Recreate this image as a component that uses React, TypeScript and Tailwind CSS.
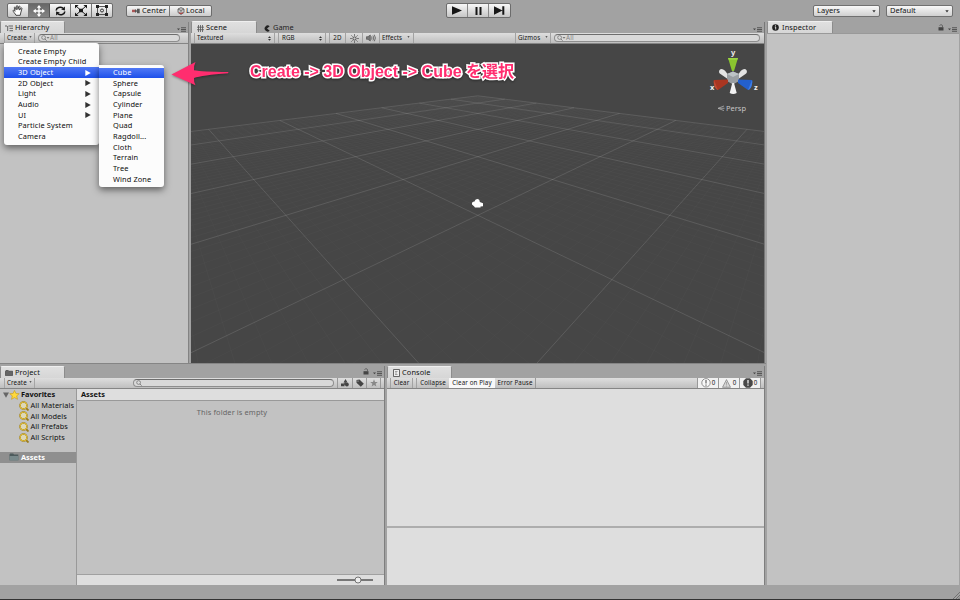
import type { ReactNode } from 'react'

const createMenu = [
    { label: 'Create Empty' },
    { label: 'Create Empty Child' },
    { label: '3D Object', sub: true, active: true },
    { label: '2D Object', sub: true },
    { label: 'Light', sub: true },
    { label: 'Audio', sub: true },
    { label: 'UI', sub: true },
    { label: 'Particle System' },
    { label: 'Camera' },
]

const objectMenu = ['Cube', 'Sphere', 'Capsule', 'Cylinder', 'Plane', 'Quad', 'Ragdoll...', 'Cloth', 'Terrain', 'Tree', 'Wind Zone']

const favorites = ['All Materials', 'All Models', 'All Prefabs', 'All Scripts']

// ground plane seen at 45 degrees, depth grows away from the camera
const project = (i: number, j: number) => {
    const d = (i + j) / 2 + 1.756
    return [286.8 + (337 * (i - j)) / 2 / d, 9.8 + 283.6 / d]
}

const gridPath = (values: number[]) =>
    values
        .map((v) => {
            const near = Math.max(-5, -3.1 - v)
            const [ax, ay] = project(v, near)
            const [bx, by] = project(v, 5)
            const [cx, cy] = project(near, v)
            const [dx, dy] = project(5, v)
            return `M${ax} ${ay}L${bx} ${by}M${cx} ${cy}L${dx} ${dy}`
        })
        .join('')

const major = Array.from({ length: 11 }, (_, n) => n - 5)
const minor = Array.from({ length: 101 }, (_, n) => n / 10 - 5).filter((_, n) => n % 10 !== 0)

function Tab({ icon, label, className = '' }: { icon: ReactNode; label: string; className?: string }) {
    return (
        <div className={`flex h-[12px] items-center gap-[2px] rounded-t-[2px] border-x border-t border-[#8c8c8c] border-t-[#efefef] bg-gradient-to-b from-[#e0e0e0] to-[#d6d6d6] pt-px text-[7.4px] tracking-[0.12px] text-[#111] ${className}`}>
            {icon}
            <span>{label}</span>
        </div>
    )
}

function PaneMenu() {
    return (
        <svg className="mb-px h-[5px] w-[9px] shrink-0" viewBox="0 0 9 5">
            <path d="M0 1.5h3L1.5 3.3z" fill="#444" />
            <path d="M4 .8h5M4 2.5h5M4 4.2h5" stroke="#555" strokeWidth="1.1" />
        </svg>
    )
}

function Lock() {
    return (
        <svg className="mb-[2px] h-[7px] w-[6px] shrink-0" viewBox="0 0 6 7">
            <path d="M.5 3.2h5v3.3h-5z" fill="#444" />
            <path d="M1.6 1.7C2 .3 4.5.3 4.5 2v1.5" fill="none" stroke="#555" strokeWidth=".8" />
        </svg>
    )
}

function Caret({ className = '' }: { className?: string }) {
    return (
        <svg className={`shrink-0 ${className || 'mb-[2px] h-[2px] w-[3px]'}`} viewBox="0 0 4 3">
            <path d="M.3 .3h3.4L2 2.6z" fill="#333" />
        </svg>
    )
}

function UpDown() {
    return (
        <svg className="h-[5px] w-[3px] shrink-0" viewBox="0 0 3 5">
            <path d="M0 2h3L1.5.2zM0 3h3L1.5 4.8z" fill="#333" />
        </svg>
    )
}

function Search({ placeholder, className = '' }: { placeholder?: string; className?: string }) {
    return (
        <div className={`flex h-[8px] items-center rounded-full border border-[#8e8e8e] border-t-[#6e6e6e] bg-[#d9d9d9] pl-[2px] text-[6.3px] text-[#858585] ${className}`}>
            <svg className="h-[6px] w-[9px] shrink-0" viewBox="0 0 9 6">
                <circle cx="2.6" cy="2.5" r="1.9" fill="none" stroke="#777" strokeWidth=".8" />
                <path d="M4 4l1.6 1.7" stroke="#777" strokeWidth=".9" />
                {placeholder && <path d="M5.5 2h3L7 3.7z" fill="#777" />}
            </svg>
            <span>{placeholder}</span>
        </div>
    )
}

function Toolbar({ children, className = '' }: { children?: ReactNode; className?: string }) {
    return <div className={`flex h-[11px] shrink-0 items-stretch border-b border-[#858585] bg-gradient-to-b from-[#dedede] to-[#bfbfbf] text-[6.2px] tracking-[0.12px] text-[#151515] ${className}`}>{children}</div>
}

function Tools() {
    return (
        <div className="flex h-[15px] w-[106px] overflow-hidden rounded-[2px] border border-[#6c6c6c] bg-gradient-to-b from-[#fafafa] to-[#c8c8c8]">
            <div className="flex w-[21px] items-center justify-center border-r border-[#777]">
                <svg className="h-[11px] w-[12px]" viewBox="0 0 12 11">
                    <path d="M4 10.3C3.2 8.5 1.2 7 1 5.7c.3-.8 1.2-.4 2 .6L2.3 2.7c.1-.8.9-.8 1.1-.1l.8 2.2L4.4 1.2c.2-.8 1.1-.8 1.3 0l.2 3.3.9-3c.3-.7 1.2-.5 1.2.2l-.4 3.4 1.3-2c.6-.6 1.2-.1 1 .6L8.700 8l-.5 2.300z" fill="#fff" stroke="#222" strokeWidth=".8" />
                </svg>
            </div>
            <div className="flex w-[21px] items-center justify-center border-r border-[#555] bg-gradient-to-b from-[#686868] to-[#858585]">
                <svg className="h-[12px] w-[12px]" viewBox="0 0 12 12">
                    <path d="M6 0l2.2 2.8H6.7v2.5h2.5V3.8L12 6 9.2 8.2V6.7H6.7v2.5h1.5L6 12 3.8 9.2h1.5V6.7H2.8v1.5L0 6l2.8-2.2v1.5h2.5V2.8H3.8z" fill="#fff" />
                </svg>
            </div>
            <div className="flex w-[21px] items-center justify-center border-r border-[#777]">
                <svg className="h-[10px] w-[11px]" viewBox="0 0 11 10">
                    <path d="M1.2 4.5C1.4 1.4 5.5.4 8 2.2M9.8 5.5C9.6 8.6 5.5 9.6 3 7.8" fill="none" stroke="#151515" strokeWidth="1.6" />
                    <path d="M9.9.4v4L6.2 3.6zM1.1 9.6v-4l3.7.8z" fill="#151515" />
                </svg>
            </div>
            <div className="flex w-[21px] items-center justify-center border-r border-[#777]">
                <svg className="h-[11px] w-[12px]" viewBox="0 0 12 11">
                    <path d="M1 1l10 9M11 1L1 10" stroke="#222" strokeWidth="1" />
                    <path d="M0 0h3.600L0 3.400zM12 0H8.400L12 3.400zM0 11h3.600L0 7.600zM12 11H8.400l3.600-3.400zM4 3.700h4v3.600H4z" fill="#181818" />
                </svg>
            </div>
            <div className="flex flex-1 items-center justify-center">
                <svg className="h-[11px] w-[12px]" viewBox="0 0 12 11">
                    <path d="M1.5 1.5h9v8h-9z" fill="none" stroke="#333" strokeWidth=".8" />
                    <path d="M0 0h3v3H0zM9 0h3v3H9zM0 8h3v3H0zM9 8h3v3H9z" fill="#222" />
                    <circle cx="6" cy="5.5" r="1.5" fill="none" stroke="#222" strokeWidth=".9" />
                </svg>
            </div>
        </div>
    )
}

function TopBar() {
    return (
        <div className="flex h-[22px] shrink-0 items-start pl-[7px] pr-[7px] pt-[3px] text-[7.5px] text-[#111]">
            <Tools />
            <div className="ml-[13px] mt-[2px] flex h-[12px] w-[86px] rounded-[2px] border border-[#6c6c6c] bg-gradient-to-b from-[#f6f6f6] to-[#cbcbcb] tracking-[0.1px]">
                <div className="flex w-[43px] items-center gap-[2px] border-r border-[#777] pl-[5px]">
                    <svg className="h-[6px] w-[8px] shrink-0" viewBox="0 0 8 6">
                        <path d="M0 1.700h3v2.500H0z" fill="#a55" />
                        <path d="M3 1l2.300 2L3 5zM5 .7h2.700v4.500H5z" fill="#555" />
                    </svg>
                    <span>Center</span>
                </div>
                <div className="flex flex-1 items-center gap-[1px] pl-[7px]">
                    <svg className="h-[8px] w-[8px] shrink-0" viewBox="0 0 8 8">
                        <path d="M1 2l3-1.400L7 2v3.500L4 7.400 1 5.500z" fill="#ccc" stroke="#555" strokeWidth=".8" />
                        <path d="M1 2l3 1.500L7 2M4 3.500v3.700" fill="none" stroke="#555" strokeWidth=".7" />
                        <path d="M2 5.500l2 1.200 2-1.200" fill="none" stroke="#b33" strokeWidth=".9" />
                    </svg>
                    <span>Local</span>
                </div>
            </div>
            <div className="ml-[234px] flex h-[15px] w-[65px] rounded-[2px] border border-[#6c6c6c] bg-gradient-to-b from-[#f8f8f8] to-[#c6c6c6]">
                <div className="flex w-[21px] items-center justify-center border-r border-[#888]">
                    <svg className="h-[9px] w-[10px]" viewBox="0 0 10 9"><path d="M0 .3l10 4.200-10 4.200z" fill="#161616" /></svg>
                </div>
                <div className="flex w-[21px] items-center justify-center border-r border-[#888]">
                    <svg className="h-[8px] w-[7px]" viewBox="0 0 7 8"><path d="M.5 0h2v8h-2zM4.500 0h2v8h-2z" fill="#161616" /></svg>
                </div>
                <div className="flex flex-1 items-center justify-center">
                    <svg className="h-[9px] w-[11px]" viewBox="0 0 11 9"><path d="M0 .3l8.500 4.200L0 8.700zM8.300.3h2v8.400h-2z" fill="#161616" /></svg>
                </div>
            </div>
            <div className="ml-auto mt-[2px] flex h-[12px] w-[67px] items-center justify-between rounded-[2px] border border-[#707070] bg-gradient-to-b from-[#f8f8f8] to-[#d0d0d0] pl-[3px] pr-[3px]">
                <span>Layers</span>
                <Caret className="h-[3px] w-[4px]" />
            </div>
            <div className="ml-[6px] mt-[2px] flex h-[12px] w-[67px] items-center justify-between rounded-[2px] border border-[#707070] bg-gradient-to-b from-[#f8f8f8] to-[#d0d0d0] pl-[3px] pr-[3px]">
                <span>Default</span>
                <Caret className="h-[3px] w-[4px]" />
            </div>
        </div>
    )
}

function CreateButton() {
    return (
        <div className="ml-[4px] flex w-[31px] items-center justify-between border-x border-[#a5a5a5] px-[2px]">
            <span>Create</span>
            <Caret />
        </div>
    )
}

function Hierarchy() {
    return (
        <div className="flex w-[189px] shrink-0 flex-col border-r border-[#838383]">
            <div className="flex h-[11px] items-end justify-between pr-[2px]">
                <Tab
                    className="w-[65px] pl-[4px]"
                    label="Hierarchy"
                    icon={
                        <svg className="h-[7px] w-[8px]" viewBox="0 0 8 7">
                            <path d="M0 1h2M3.500 1H8M4.500 3.300H8M4.500 5.700H8M2.700 1v5" stroke="#555" strokeWidth=".9" />
                        </svg>
                    }
                />
                <PaneMenu />
            </div>
            <Toolbar>
                <CreateButton />
                <Search placeholder="All" className="ml-[3px] mt-[1px] w-[142px]" />
            </Toolbar>
            <div className="flex-1 bg-[#c2c2c2]" />
        </div>
    )
}

function Gizmo() {
    return (
        <svg className="absolute left-[515px] top-[4px] h-[72px] w-[56px] overflow-visible" viewBox="0 0 56 72">
            <path d="M21 30.500l-6.500-4.500c-2-1-2-4 .5-5 2 0 4.500 1.500 5 3l3 4z" fill="#e4e4e4" />
            <path d="M33 30.500l6.500-4.500c2-1 2-4-.5-5-2 0-4.500 1.500-5 3l-3 4z" fill="#e4e4e4" />
            <path d="M21 26l6-2.500 6 2.500v7l-6 3.500-6-3.500z" fill="#9a9fa3" />
            <path d="M21 26l6-2.500 6 2.500-6 3z" fill="#bdc3c6" />
            <path d="M22 10h10l-4 13h-2z" fill="#8ac52f" />
            <path d="M22 10h10l-.7 1.800h-8.600z" fill="#9bd643" />
            <path d="M22 31.500L8 32c-1 2 1 9 4 10l10-7z" fill="#a93621" />
            <path d="M8 32l4 10c-3 0-5-7-4-10z" fill="#c04a34" />
            <path d="M32 31.500l14 .5c1 2-1 9-4 10l-10-7z" fill="#2360cd" />
            <path d="M46 32l-4 10c3 0 5-7 4-10z" fill="#3d7de8" />
            <path d="M26.300 35h1.700l2.700 10q-3.500 2-7 0z" fill="#f2f2f2" />
            <g fill="#eee" fontFamily="Noto Sans" fontSize="7.500" fontWeight="bold">
                <text x="25" y="7">y</text>
                <text x="4" y="41.500">x</text>
                <text x="48" y="41.500">z</text>
            </g>
            <path d="M18 58l-6 2.300 6 2.300M12.500 60.300h6" fill="none" stroke="#bbb" strokeWidth=".7" />
            <text x="20" y="63" fill="#c5c5c5" fontFamily="Noto Sans" fontSize="7.500">Persp</text>
        </svg>
    )
}

function Scene() {
    return (
        <div className="ml-[2px] flex w-[574px] shrink-0 flex-col border-r border-[#777]">
            <div className="flex h-[11px] items-end pr-[2px]">
                <Tab
                    className="w-[66px] pl-[5px]"
                    label="Scene"
                    icon={
                        <svg className="h-[7px] w-[7px]" viewBox="0 0 7 7">
                            <path d="M1.500 0v7M3.500 0v7M5.500 0v7M0 2.200h7M0 4.700h7" stroke="#555" strokeWidth=".8" />
                        </svg>
                    }
                />
                <div className="ml-[7px] flex h-[11px] items-center gap-[3px] pt-px text-[7.4px] text-[#222]">
                    <svg className="h-[7px] w-[6px]" viewBox="0 0 6 7">
                        <path d="M5.700 1.300A3 3 0 1 0 5.700 5.700L3 3.500z" fill="#222" />
                    </svg>
                    <span>Game</span>
                </div>
                <div className="ml-auto flex"><PaneMenu /></div>
            </div>
            <Toolbar>
                <div className="ml-[3px] flex w-[81px] items-center justify-between border-x border-[#a2a2a2] pl-[2px] pr-[3px]">
                    <span>Textured</span>
                    <UpDown />
                </div>
                <div className="ml-[3px] flex w-[48px] items-center justify-between border-x border-[#a2a2a2] px-[3px]">
                    <span>RGB</span>
                    <UpDown />
                </div>
                <div className="ml-[3px] flex w-[17px] items-center justify-center border-x border-[#a2a2a2]">2D</div>
                <div className="flex w-[17px] items-center justify-center border-r border-[#a2a2a2]">
                    <svg className="h-[9px] w-[9px]" viewBox="0 0 9 9">
                        <circle cx="4.500" cy="4.500" r="1.600" fill="none" stroke="#333" strokeWidth=".8" />
                        <path d="M4.500.3v1.400M4.500 7.300v1.400M.3 4.500h1.400M7.300 4.500h1.400M1.500 1.500l1 1M6.500 6.500l1 1M1.500 7.500l1-1M6.500 2.500l1-1" stroke="#333" strokeWidth=".8" />
                    </svg>
                </div>
                <div className="flex w-[17px] items-center justify-center border-r border-[#a2a2a2]">
                    <svg className="h-[8px] w-[10px]" viewBox="0 0 10 8">
                        <path d="M.5 2.700h1.500L4.300 1v6L2 5.300H.5z" fill="#777" stroke="#444" strokeWidth=".6" />
                        <path d="M5.500 2.500q1 1.500 0 3M6.900 1.500q1.800 2.500 0 5M8.300.7q2.200 3.300 0 6.600" fill="none" stroke="#444" strokeWidth=".7" />
                    </svg>
                </div>
                <div className="flex w-[34px] items-center justify-between border-r border-[#a2a2a2] pl-[2px] pr-[3px]">
                    <span>Effects</span>
                    <Caret />
                </div>
                <div className="ml-[101px] flex w-[36px] items-center justify-between border-x border-[#a2a2a2] px-[2px]">
                    <span>Gizmos</span>
                    <Caret />
                </div>
                <Search placeholder="All" className="ml-[3px] mt-[1px] w-[206px]" />
            </Toolbar>
            <div className="relative flex-1 overflow-hidden bg-[#464646]">
                <svg className="block h-[319px] w-[573px]" viewBox="0 0 573 319">
                    <path d={gridPath(minor)} fill="none" stroke="#fff" strokeOpacity=".035" strokeWidth=".6" />
                    <path d={gridPath(major)} fill="none" stroke="#fff" strokeOpacity=".15" strokeWidth=".8" />
                    <path d="M281 160.500q-.5-3 2.500-3 .5-2.500 2.700-2.500 2.500 0 2.600 3l3.200 1.200v3l-2.500.3v1h-5.500q-.5-1-3-3z" fill="#fff" />
                </svg>
                <Gizmo />
            </div>
        </div>
    )
}

function Inspector() {
    return (
        <div className="ml-px flex flex-1 flex-col">
            <div className="flex h-[11px] items-end pr-[3px]">
                <Tab
                    className="w-[66px] pl-[4px]"
                    label="Inspector"
                    icon={
                        <svg className="mb-px mr-[1px] h-[7px] w-[7px]" viewBox="0 0 7 7">
                            <circle cx="3.500" cy="3.500" r="3.300" fill="#222" />
                            <path d="M3.500 1.300v1M2.800 3h.9v2.500" stroke="#eee" strokeWidth=".9" fill="none" />
                        </svg>
                    }
                />
                <div className="ml-auto flex items-end gap-[4px]">
                    <Lock />
                    <PaneMenu />
                </div>
            </div>
            <div className="mr-px flex-1 border-t border-[#999] bg-[#c2c2c2]" />
        </div>
    )
}

function Project() {
    return (
        <div className="flex w-[385px] shrink-0 flex-col border-r border-[#7e7e7e]">
            <div className="flex h-[12px] items-end justify-between pr-[2px]">
                <Tab
                    className="w-[65px] pl-[4px]"
                    label="Project"
                    icon={
                        <svg className="mb-px h-[6px] w-[8px]" viewBox="0 0 8 6">
                            <path d="M.4 1.200L1 .4h2.200l.6.8h3.800v4.400H.4z" fill="#666" stroke="#333" strokeWidth=".6" />
                        </svg>
                    }
                />
                <div className="flex items-end gap-[4px] pb-px">
                    <Lock />
                    <PaneMenu />
                </div>
            </div>
            <Toolbar>
                <CreateButton />
                <Search className="ml-[98px] mt-[1px] w-[201px]" />
                <div className="ml-[3px] flex w-[15px] items-center justify-center border-l border-[#999]">
                    <svg className="h-[8px] w-[8px]" viewBox="0 0 8 8">
                        <path d="M4.500 0l2 3.500h-4zM0 4.500h3.500v2.700H0z" fill="#444" />
                        <path d="M4.500 2L2 6h4z" fill="#555" />
                        <circle cx="5.900" cy="5.500" r="1.900" fill="#444" />
                    </svg>
                </div>
                <div className="flex w-[14px] items-center justify-center border-l border-[#999]">
                    <svg className="h-[8px] w-[8px]" viewBox="0 0 8 8">
                        <path d="M.5 1l3-.5L7.800 4.800 4.800 7.800.5 3.800z" fill="#444" />
                        <circle cx="2" cy="2" r=".6" fill="#ddd" />
                    </svg>
                </div>
                <div className="flex w-[15px] items-center justify-center border-x border-[#999]">
                    <svg className="h-[8px] w-[8px]" viewBox="0 0 8 8">
                        <path d="M4 .3l1 2.600 2.800.2-2.200 1.700.8 2.800L4 6.100 1.600 7.600l.8-2.800L.2 3.100l2.800-.2z" fill="#888" />
                    </svg>
                </div>
            </Toolbar>
            <div className="flex flex-1 bg-[#c2c2c2] text-[7.4px] text-[#111]">
                <div className="flex w-[77px] shrink-0 flex-col border-r border-[#999]">
                    <div className="flex h-[11.3px] items-center pl-[3px] pt-px font-bold">
                        <svg className="h-[6px] w-[6px]" viewBox="0 0 6 6"><path d="M0 .5h6L3 5.800z" fill="#666" /></svg>
                        <svg className="h-[10px] w-[11px]" viewBox="0 0 10 10">
                            <path d="M5 .4l1.400 3 3.300.3-2.500 2.200.8 3.400L5 7.600 2 9.300l.8-3.400L.3 3.700l3.300-.3z" fill="#ffd93b" stroke="#c99a13" strokeWidth=".6" />
                        </svg>
                        <span className="ml-[1px]">Favorites</span>
                    </div>
                    {favorites.map((name) => (
                        <div key={name} className="flex h-[10.65px] items-center whitespace-nowrap pl-[19px]">
                            <svg className="h-[10px] w-[10px] shrink-0" viewBox="0 0 10 10">
                                <path d="M6.500 6.500l3 3" stroke="#9a7c1d" strokeWidth="1.800" />
                                <circle cx="4.500" cy="4.500" r="3.500" fill="#ddd8b8" stroke="#8d7218" strokeWidth="1.500" />
                                <circle cx="4.500" cy="4.500" r="3.500" fill="none" stroke="#f0cb3c" strokeWidth=".9" />
                            </svg>
                            <span className="ml-[1.5px] tracking-[0.06px]">{name}</span>
                        </div>
                    ))}
                    <div className="mt-[9px] flex h-[11px] items-center bg-[#8f8f8f] pl-[9px] font-bold text-white">
                        <svg className="h-[8px] w-[10px]" viewBox="0 0 10 8">
                            <path d="M.5 1.500L1.200.5h3l.8 1h4.300v5.800H.5z" fill="#4d5b5d" />
                            <path d="M.5 3h9v4.500h-9z" fill="#78898b" />
                        </svg>
                        <span className="ml-[2px]">Assets</span>
                    </div>
                </div>
                <div className="flex flex-1 flex-col">
                    <div className="flex h-[12px] items-center border-b border-[#999] bg-[#dedede] pl-[4px] font-bold">Assets</div>
                    <div className="flex-1 pl-[3px] pt-[8px] text-center text-[7.4px] tracking-[0.12px] text-[#666]">This folder is empty</div>
                    <div className="flex h-[11px] items-center justify-end border-t border-[#a0a0a0] bg-[#dedede] pr-[10px]">
                        <svg className="h-[8px] w-[38px]" viewBox="0 0 38 8">
                            <path d="M1 4h36" stroke="#777" strokeWidth="1.800" />
                            <circle cx="22" cy="4" r="3" fill="#eee" stroke="#666" strokeWidth=".9" />
                        </svg>
                    </div>
                </div>
            </div>
        </div>
    )
}

function Console() {
    return (
        <div className="ml-[2px] flex flex-1 flex-col border-r border-[#7e7e7e]">
            <div className="flex h-[12px] items-end justify-between pr-[2px]">
                <Tab
                    className="w-[65px] pl-[5px]"
                    label="Console"
                    icon={
                        <svg className="mb-px h-[8px] w-[7px]" viewBox="0 0 7 8">
                            <path d="M.5.5h6v7h-6z" fill="#eee" stroke="#444" strokeWidth=".8" />
                            <path d="M2 2.500h2.500M2 4h2M2 5.500h2.500" stroke="#666" strokeWidth=".6" />
                        </svg>
                    }
                />
                <div className="pb-px"><PaneMenu /></div>
            </div>
            <Toolbar>
                <div className="ml-[3px] flex w-[23px] items-center justify-center border-x border-[#a2a2a2]">Clear</div>
                <div className="ml-[3px] flex w-[33px] items-center justify-center border-l border-[#a2a2a2]">Collapse</div>
                <div className="flex w-[46px] items-center justify-center whitespace-nowrap bg-[#f8f8f8]">Clear on Play</div>
                <div className="flex w-[41px] items-center justify-center whitespace-nowrap border-r border-[#999]">Error Pause</div>
                <div className="ml-auto flex w-[21px] items-center justify-center gap-[1px] border-l border-[#999] bg-[#f1f1f1]">
                    <svg className="h-[10px] w-[10px]" viewBox="0 0 10 10">
                        <circle cx="5" cy="4.800" r="4.200" fill="#f8f8f8" stroke="#777" strokeWidth=".8" />
                        <path d="M5 2v3.500M5 6.500v1.200" stroke="#444" strokeWidth="1" />
                    </svg>
                    0
                </div>
                <div className="flex w-[21px] items-center justify-center gap-[2px] border-l border-[#999] bg-[#f1f1f1]">
                    <svg className="h-[9px] w-[9px]" viewBox="0 0 9 9">
                        <path d="M4.500.6l4 7.700h-8z" fill="#d5d5d5" stroke="#888" strokeWidth=".8" />
                        <path d="M4.500 3v2.800M4.500 6.600v1" stroke="#999" strokeWidth=".8" />
                    </svg>
                    0
                </div>
                <div className="mr-[3px] flex w-[22px] items-center justify-center gap-[1px] border-x border-[#999] bg-[#f1f1f1]">
                    <svg className="h-[10px] w-[10px]" viewBox="0 0 10 10">
                        <path d="M3 .3h4L9.700 3v4L7 9.700H3L.3 7V3z" fill="#484848" />
                        <path d="M5 2v3.500M5 6.500v1.200" stroke="#fff" strokeWidth="1.200" />
                    </svg>
                    0
                </div>
            </Toolbar>
            <div className="h-[139px] border-b-2 border-[#adadad] bg-[#dedede]" />
            <div className="flex-1 bg-[#dedede]" />
        </div>
    )
}

function Menus() {
    return (
        <div className="absolute left-[4px] top-[43px] flex items-start text-[7.4px] tracking-[0.12px] text-[#0c0c0c]">
            <div className="w-[95px] rounded-b-[3px] rounded-tr-[3px] bg-[#fcfcfc] pb-[3px] pt-[3px] shadow-[0_3px_7px_rgba(0,0,0,0.5)]">
                {createMenu.map((item) => (
                    <div key={item.label} className={`flex h-[10.67px] items-center justify-between whitespace-nowrap pl-[14px] pr-[8px] ${item.active ? 'bg-gradient-to-b from-[#5078f5] to-[#1d4fea] text-white' : ''}`}>
                        <span>{item.label}</span>
                        {item.sub && (
                            <svg className="h-[6px] w-[6px]" viewBox="0 0 6 6"><path d="M.3 0v6L5.800 3z" fill={item.active ? '#fff' : '#333'} /></svg>
                        )}
                    </div>
                ))}
            </div>
            <div className="mt-[22px] w-[65px] rounded-b-[3px] rounded-tr-[3px] bg-[#fcfcfc] pb-[2px] pt-[2.5px] shadow-[0_3px_7px_rgba(0,0,0,0.5)]">
                {objectMenu.map((name) => (
                    <div key={name} className={`flex h-[10.67px] items-center whitespace-nowrap pl-[14px] ${name === 'Cube' ? 'bg-gradient-to-b from-[#5078f5] to-[#1d4fea] text-white' : ''}`}>
                        {name}
                    </div>
                ))}
            </div>
        </div>
    )
}

function Callout() {
    return (
        <>
            <svg className="absolute left-[170px] top-[60px] h-[28px] w-[60px] drop-shadow-[0_1px_1px_rgba(0,0,0,0.35)]" viewBox="0 0 60 28">
                <path d="M1.500 14.500L25.500 2q-2 4-1.500 8.300 8 1.500 34 1.700 1 .6 0 1.300-26 2-34 4.700-.3 4 1.500 7.300z" fill="#ff2d6f" />
            </svg>
            <p className="absolute left-[250px] top-[62px] whitespace-nowrap font-['Liberation_Sans','Noto_Sans_CJK_JP',sans-serif] text-[16px] font-bold leading-[20px] text-[#ff2d6f] drop-shadow-[0_1px_1px_rgba(0,0,0,0.4)] [-webkit-text-stroke:3px_#fff] [paint-order:stroke_fill]">
                Create -&gt; 3D Object -&gt; Cube を選択
            </p>
        </>
    )
}

export default function App() {
    return (
        <div className="relative flex h-[600px] w-[960px] flex-col overflow-hidden bg-[#a2a2a2] font-['Noto_Sans','Noto_Sans_CJK_JP',sans-serif] leading-none">
            <TopBar />
            <div className="flex h-[563px] shrink-0">
                <div className="flex w-[766px] shrink-0 flex-col">
                    <div className="flex h-[341px]">
                        <Hierarchy />
                        <Scene />
                    </div>
                    <div className="flex h-[222px] border-t border-[#858585] pt-[2px]">
                        <Project />
                        <Console />
                        <div className="w-px" />
                    </div>
                </div>
                <Inspector />
            </div>
            <div className="flex flex-1 items-end justify-end border-b border-[#333]">
                <svg className="h-[8px] w-[8px]" viewBox="0 0 8 8"><path d="M1 8l7-7M4 8l4-4M6.500 8L8 6.500" stroke="#666" strokeWidth=".8" /></svg>
            </div>
            <Menus />
            <Callout />
        </div>
    )
}
